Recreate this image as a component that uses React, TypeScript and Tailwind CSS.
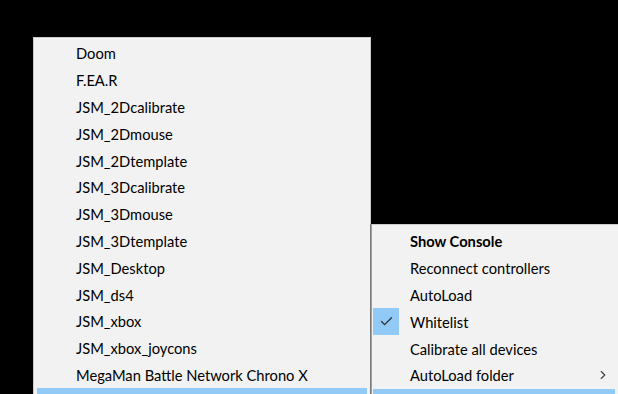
import { Check, ChevronRight } from "lucide-react";

const games = [
  "Doom",
  "F.EA.R",
  "JSM_2Dcalibrate",
  "JSM_2Dmouse",
  "JSM_2Dtemplate",
  "JSM_3Dcalibrate",
  "JSM_3Dmouse",
  "JSM_3Dtemplate",
  "JSM_Desktop",
  "JSM_ds4",
  "JSM_xbox",
  "JSM_xbox_joycons",
  "MegaMan Battle Network Chrono X",
];

type Item = { label: string; bold?: boolean; checked?: boolean; submenu?: boolean };

const trayItems: Item[] = [
  { label: "Show Console", bold: true },
  { label: "Reconnect controllers" },
  { label: "AutoLoad" },
  { label: "Whitelist", checked: true },
  { label: "Calibrate all devices" },
  { label: "AutoLoad folder", submenu: true },
];

export default function App() {
  return (
    <div
      className="relative w-[618px] h-[394px] overflow-hidden bg-black text-[14.7px] text-black"
      style={{ fontFamily: 'Lato, "Liberation Sans", Arial, sans-serif' }}
    >
      {/* games submenu */}
      <div className="absolute left-[33px] top-[37px] w-[338px] h-[380px] border border-[#cccccc] bg-[#f2f2f2] px-[3px] pt-[2px]">
        {games.map((g) => (
          <div key={g} className="flex h-[26.8px] items-center pl-[39px]">
            {g}
          </div>
        ))}
        <div className="h-[26.8px] bg-[#91c9f7]" />
      </div>

      {/* tray menu */}
      <div className="absolute left-[371px] top-[224px] w-[250px] h-[200px] border-l border-l-[#a0a0a0] border-t border-t-[#cccccc] border-r border-r-[#cccccc] bg-[#f2f2f2] pl-[1px] pr-[2px] pt-[3px] shadow-[-1px_0_0_#7a7a7a]">
        {trayItems.map((it) => (
          <div key={it.label} className="flex h-[26.8px] items-center">
            <div
              className={
                "flex h-full w-[26px] items-center justify-center " +
                (it.checked ? "bg-[#91c9f7]" : "")
              }
            >
              {it.checked && <Check className="size-[15px] text-[#333]" strokeWidth={2.2} />}
            </div>
            <span className={"ml-[11px] flex-1 " + (it.bold ? "font-bold" : "")}>{it.label}</span>
            {it.submenu && <ChevronRight className="mr-[8px] size-[14px] text-[#444]" strokeWidth={2} />}
          </div>
        ))}
        <div className="h-[26.8px] w-[242px] bg-[#91c9f7]" />
      </div>
    </div>
  );
}
